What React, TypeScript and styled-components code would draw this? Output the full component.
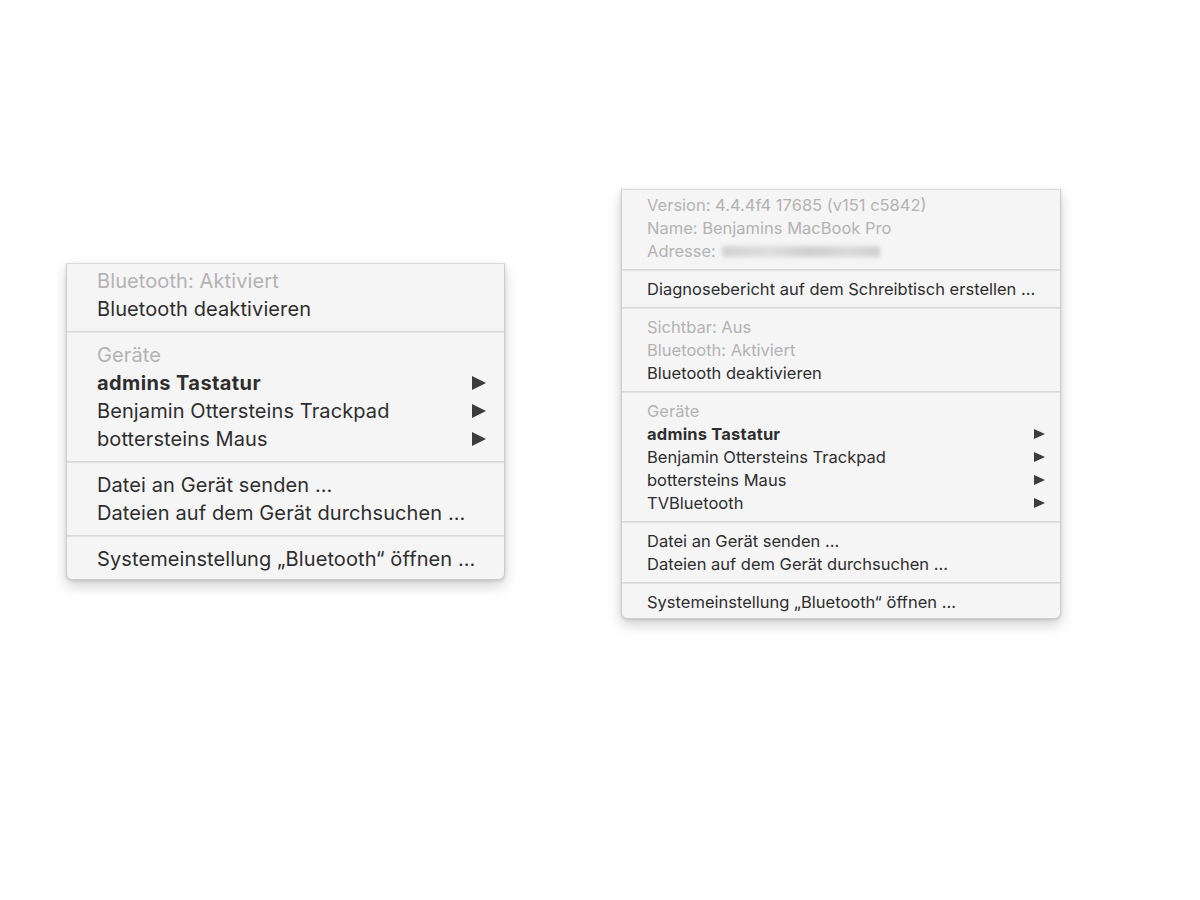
import React from "react";
import styled, { createGlobalStyle, css } from "styled-components";

const Global = createGlobalStyle`
  html, body { margin: 0; padding: 0; background: #ffffff; }
  body { font-family: Inter, "Open Sans", "Liberation Sans", sans-serif; -webkit-font-smoothing: antialiased; }
`;

type Size = "lg" | "sm";

const metrics = {
  lg: { font: 20, row: 28, padL: 30, padR: 18, sep: 18, top: 3, bottom: 6, arrowW: 14, arrowH: 14, width: 439, ls: 0.1, bls: 0.4 },
  sm: { font: 16.5, row: 23, padL: 25, padR: 15, sep: 15, top: 3.5, bottom: 4.5, arrowW: 11, arrowH: 11, width: 440, ls: 0, bls: 0.2 },
};

const Page = styled.div`
  display: flex;
  align-items: flex-start;
  gap: 116px;
  padding-left: 66px;
  height: 900px;
  box-sizing: border-box;
`;

const Menu = styled.div<{ $size: Size; $top: number }>`
  margin-top: ${(p) => p.$top}px;
  width: ${(p) => metrics[p.$size].width}px;
  box-sizing: border-box;
  display: flex;
  flex-direction: column;
  padding: ${(p) => metrics[p.$size].top}px 0 ${(p) => metrics[p.$size].bottom}px;
  background: #f5f5f5;
  border: 1px solid #cdcdcd;
  border-top-color: #dcdcdc;
  border-radius: 0 0 6px 6px;
  box-shadow: 0 6px 14px rgba(0, 0, 0, 0.18), 0 1px 3px rgba(0, 0, 0, 0.12);
  font-size: ${(p) => metrics[p.$size].font}px;
  color: #2e2e2e;
`;

const Row = styled.div<{ $size: Size; $disabled?: boolean; $bold?: boolean }>`
  display: flex;
  align-items: center;
  justify-content: space-between;
  height: ${(p) => metrics[p.$size].row}px;
  padding: 0 ${(p) => metrics[p.$size].padR}px 0 ${(p) => metrics[p.$size].padL}px;
  white-space: nowrap;
  letter-spacing: ${(p) => metrics[p.$size].ls}px;
  ${(p) =>
    p.$disabled &&
    css`
      color: #b3b3b3;
    `}
  ${(p) =>
    p.$bold &&
    css`
      font-weight: 700;
      letter-spacing: ${metrics[p.$size].bls}px;
    `}
`;

const Label = styled.span`
  display: flex;
  align-items: center;
`;

const Separator = styled.div<{ $size: Size }>`
  height: ${(p) => metrics[p.$size].sep}px;
  display: flex;
  align-items: center;
  &::after {
    content: "";
    flex: 1;
    height: 2px;
    background: #e2e2e2;
    border-top: 1px solid #d9d9d9;
    box-sizing: border-box;
  }
`;

const Arrow = styled.span<{ $size: Size }>`
  width: 0;
  height: 0;
  border-top: ${(p) => metrics[p.$size].arrowH / 2}px solid transparent;
  border-bottom: ${(p) => metrics[p.$size].arrowH / 2}px solid transparent;
  border-left: ${(p) => metrics[p.$size].arrowW}px solid #3c3c3c;
`;

const Blurred = styled.span`
  display: inline-block;
  width: 158px;
  height: 11px;
  margin-left: 6px;
  background: linear-gradient(90deg, #d2d2d2, #dedede 30%, #cfcfcf 55%, #dadada 80%, #d0d0d0);
  filter: blur(2px);
  border-radius: 2px;
`;

type Item =
  | { kind: "sep" }
  | { kind: "row"; text: string; disabled?: boolean; bold?: boolean; sub?: boolean; blur?: boolean };

const leftItems: Item[] = [
  { kind: "row", text: "Bluetooth: Aktiviert", disabled: true },
  { kind: "row", text: "Bluetooth deaktivieren" },
  { kind: "sep" },
  { kind: "row", text: "Geräte", disabled: true },
  { kind: "row", text: "admins Tastatur", bold: true, sub: true },
  { kind: "row", text: "Benjamin Ottersteins Trackpad", sub: true },
  { kind: "row", text: "bottersteins Maus", sub: true },
  { kind: "sep" },
  { kind: "row", text: "Datei an Gerät senden …" },
  { kind: "row", text: "Dateien auf dem Gerät durchsuchen …" },
  { kind: "sep" },
  { kind: "row", text: "Systemeinstellung „Bluetooth“ öffnen …" },
];

const rightItems: Item[] = [
  { kind: "row", text: "Version: 4.4.4f4 17685 (v151 c5842)", disabled: true },
  { kind: "row", text: "Name: Benjamins MacBook Pro", disabled: true },
  { kind: "row", text: "Adresse:", disabled: true, blur: true },
  { kind: "sep" },
  { kind: "row", text: "Diagnosebericht auf dem Schreibtisch erstellen …" },
  { kind: "sep" },
  { kind: "row", text: "Sichtbar: Aus", disabled: true },
  { kind: "row", text: "Bluetooth: Aktiviert", disabled: true },
  { kind: "row", text: "Bluetooth deaktivieren" },
  { kind: "sep" },
  { kind: "row", text: "Geräte", disabled: true },
  { kind: "row", text: "admins Tastatur", bold: true, sub: true },
  { kind: "row", text: "Benjamin Ottersteins Trackpad", sub: true },
  { kind: "row", text: "bottersteins Maus", sub: true },
  { kind: "row", text: "TVBluetooth", sub: true },
  { kind: "sep" },
  { kind: "row", text: "Datei an Gerät senden …" },
  { kind: "row", text: "Dateien auf dem Gerät durchsuchen …" },
  { kind: "sep" },
  { kind: "row", text: "Systemeinstellung „Bluetooth“ öffnen …" },
];

function MenuView({ items, size, top }: { items: Item[]; size: Size; top: number }) {
  return (
    <Menu $size={size} $top={top}>
      {items.map((it, i) =>
        it.kind === "sep" ? (
          <Separator key={i} $size={size} />
        ) : (
          <Row key={i} $size={size} $disabled={it.disabled} $bold={it.bold}>
            <Label>
              {it.text}
              {it.blur && <Blurred />}
            </Label>
            {it.sub && <Arrow $size={size} />}
          </Row>
        )
      )}
    </Menu>
  );
}

export default function App() {
  return (
    <>
      <Global />
      <Page>
        <MenuView items={leftItems} size="lg" top={263} />
        <MenuView items={rightItems} size="sm" top={189} />
      </Page>
    </>
  );
}
